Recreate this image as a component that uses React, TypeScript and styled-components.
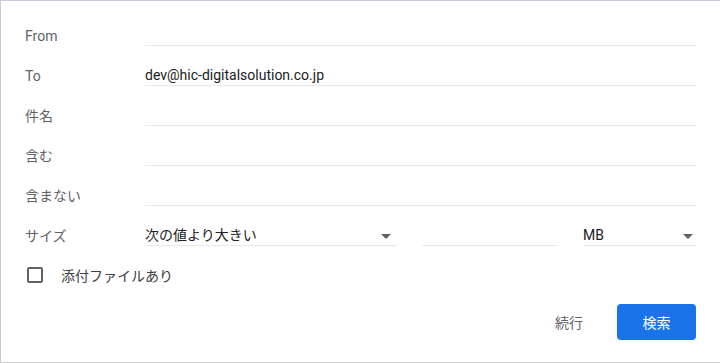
import styled, { createGlobalStyle } from "styled-components";

const Global = createGlobalStyle`
    html, body {
        margin: 0;
        padding: 0;
        background: #ffffff;
    }
    body {
        font-family: Roboto, "Noto Sans CJK JP", "Noto Sans", sans-serif;
        font-size: 14px;
    }
`

const Panel = styled.div`
    box-sizing: border-box;
    width: 720px;
    height: 363px;
    border-top: 1px solid #c9d0dd;
    border-left: 1px solid #cccccc;
    border-bottom: 1px solid #cccccc;
    padding: 5px 24px 0 24px;
    display: flex;
    flex-direction: column;
`

const Row = styled.div`
    display: grid;
    grid-template-columns: 120px 1fr;
    height: 40px;
    align-items: end;
`

const Label = styled.div`
    color: #5f6368;
    line-height: 20px;
    padding-bottom: 0px;
    transform: translateY(-0.5px);
`

const Field = styled.div`
    box-sizing: border-box;
    height: 21px;
    line-height: 20px;
    border-bottom: 1px solid #e8e8e8;
    color: #202124;
    white-space: nowrap;
    position: relative;
`

const SizeFields = styled.div`
    display: flex;
    gap: 25px;
`

const Select = styled(Field)<{ $w: number }>`
    width: ${p => p.$w}px;
    flex: none;
`

const Arrow = styled.span<{ $right: number }>`
    position: absolute;
    right: ${p => p.$right}px;
    top: 9px;
    width: 0;
    height: 0;
    border-left: 5px solid transparent;
    border-right: 5px solid transparent;
    border-top: 5px solid #5f6368;
`

const CheckRow = styled.label`
    display: flex;
    align-items: center;
    height: 20px;
    margin-top: 19px;
    padding-left: 2px;
    color: #3c4043;
`

const Box = styled.span`
    box-sizing: border-box;
    width: 16px;
    height: 16px;
    border: 2px solid #5f6368;
    border-radius: 2px;
    margin-right: 18px;
`

const Actions = styled.div`
    display: flex;
    justify-content: flex-end;
    align-items: center;
    margin-top: 19px;
    gap: 26px;
`

const TextButton = styled.button`
    font: inherit;
    background: none;
    border: none;
    color: #5f6368;
    padding: 0 8px;
    height: 36px;
    line-height: 36px;
    transform: translateY(1px);
`

const PrimaryButton = styled.button`
    font: inherit;
    background: #1a73e8;
    color: #ffffff;
    border: none;
    border-radius: 4px;
    width: 79px;
    height: 36px;
`

const rows = [
    { label: "From", value: "" },
    { label: "To", value: "dev@hic-digitalsolution.co.jp" },
    { label: "件名", value: "" },
    { label: "含む", value: "" },
    { label: "含まない", value: "" },
]

export default function App() {
    return (
        <>
            <Global />
            <Panel>
                {rows.map(r => (
                    <Row key={r.label}>
                        <Label>{r.label}</Label>
                        <Field>{r.value}</Field>
                    </Row>
                ))}
                <Row>
                    <Label>サイズ</Label>
                    <SizeFields>
                        <Select $w={252}>
                            次の値より大きい
                            <Arrow $right={6} />
                        </Select>
                        <Select $w={136} />
                        <Select $w={113}>
                            MB
                            <Arrow $right={3} />
                        </Select>
                    </SizeFields>
                </Row>
                <CheckRow>
                    <Box />
                    添付ファイルあり
                </CheckRow>
                <Actions>
                    <TextButton>続行</TextButton>
                    <PrimaryButton>検索</PrimaryButton>
                </Actions>
            </Panel>
        </>
    )
}
